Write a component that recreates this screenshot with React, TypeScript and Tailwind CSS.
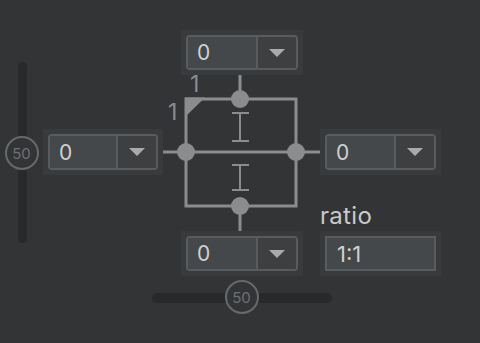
import React from 'react';

// Constraint widget panel (dark IDE theme)

function Dropdown({ value }: { value: string }) {
  return (
    <div className="bg-[#393a3c] h-full w-full px-[5px] py-[5px]">
      <div className="flex h-full rounded-[4px] border-2 border-[#595c5e] overflow-hidden">
        <div className="flex-1 bg-[#45484a] flex items-center pl-[9px] text-[21px] text-[#cfd0d0] leading-none">
          {value}
        </div>
        <div className="w-[40px] bg-[#3d3f41] border-l-2 border-[#595c5e] flex items-center justify-center">
          <svg width="16" height="8" viewBox="0 0 16 8">
            <polygon points="0,0 16,0 8,8" fill="#a9aaab" />
          </svg>
        </div>
      </div>
    </div>
  );
}

function Thumb({ className }: { className: string }) {
  return (
    <div
      className={
        'absolute w-[34px] h-[34px] rounded-full border-2 border-[#67696b] bg-[#333436] flex items-center justify-center text-[15px] text-[#6e7072] leading-none ' +
        className
      }
    >
      50
    </div>
  );
}

function ConstraintDiagram() {
  const c = '#8b8c8d';
  return (
    <svg width="157" height="156" viewBox="0 0 157 156" overflow="visible">
      {/* box */}
      <rect x="23" y="24" width="110" height="107" fill="none" stroke={c} strokeWidth="3" />
      {/* center horizontal line */}
      <line x1="0" y1="77" x2="157" y2="77" stroke={c} strokeWidth="3" />
      {/* top / bottom anchors */}
      <line x1="77" y1="0" x2="77" y2="24" stroke={c} strokeWidth="3" />
      <line x1="77" y1="131" x2="77" y2="156" stroke={c} strokeWidth="3" />
      <circle cx="77" cy="24" r="9" fill={c} />
      <circle cx="23" cy="77" r="9" fill={c} />
      <circle cx="133" cy="77" r="9" fill={c} />
      <circle cx="77" cy="131" r="9" fill={c} />
      {/* ratio corner */}
      <polygon points="22,22.5 42,22.5 22,42" fill={c} />
      {/* fixed size glyphs */}
      <g stroke={c} strokeWidth="2">
        <line x1="77" y1="38" x2="77" y2="66" />
        <line x1="69" y1="38" x2="86" y2="38" />
        <line x1="69" y1="66" x2="86" y2="66" />
        <line x1="77" y1="90" x2="77" y2="115" />
        <line x1="69" y1="90" x2="86" y2="90" />
        <line x1="69" y1="115" x2="86" y2="115" />
      </g>
      <text x="27" y="17" fontSize="23" fill={c} fontFamily="Inter, sans-serif">
        1
      </text>
      <text x="5" y="45" fontSize="23" fill={c} fontFamily="Inter, sans-serif">
        1
      </text>
    </svg>
  );
}

export default function App() {
  return (
    <div
      className="w-[480px] h-[343px] bg-[#333436] overflow-hidden"
      style={{ fontFamily: 'Inter, "Noto Sans", sans-serif' }}
    >
      <div className="grid grid-cols-[43px_120px_18px_122px_17px_121px] grid-rows-[30px_45px_54px_46px_56px_45px_4px_34px]">
        {/* vertical slider */}
        <div className="col-start-1 row-start-1 row-span-6 pt-[62px]">
          <div className="relative ml-[18px] w-[9px] h-[181px] rounded-full bg-[#28292b]">
            <Thumb className="top-[74px] left-[-13.5px]" />
          </div>
        </div>

        <div className="col-start-4 row-start-2">
          <Dropdown value="0" />
        </div>

        <div className="col-start-3 col-span-3 row-start-3 row-span-3">
          <ConstraintDiagram />
        </div>

        <div className="col-start-2 row-start-4">
          <Dropdown value="0" />
        </div>
        <div className="col-start-6 row-start-4">
          <Dropdown value="0" />
        </div>

        <div className="col-start-6 row-start-5 flex items-end pb-[3px] text-[24px] leading-none text-[#c9caca] tracking-[0.3px]">
          ratio
        </div>

        <div className="col-start-4 row-start-6">
          <Dropdown value="0" />
        </div>
        <div className="col-start-6 row-start-6 bg-[#393a3c] p-[5px]">
          <div className="h-full border-2 border-[#595c5e] bg-[#45484a] flex items-center pl-[10px] text-[22px] leading-none text-[#cfd0d0]">
            1:1
          </div>
        </div>

        {/* horizontal slider */}
        <div className="col-start-1 col-span-6 row-start-8">
          <div className="relative ml-[152px] mt-[13px] w-[180px] h-[10px] rounded-full bg-[#28292b]">
            <Thumb className="left-[72.5px] top-[-13px]" />
          </div>
        </div>
      </div>
    </div>
  );
}
